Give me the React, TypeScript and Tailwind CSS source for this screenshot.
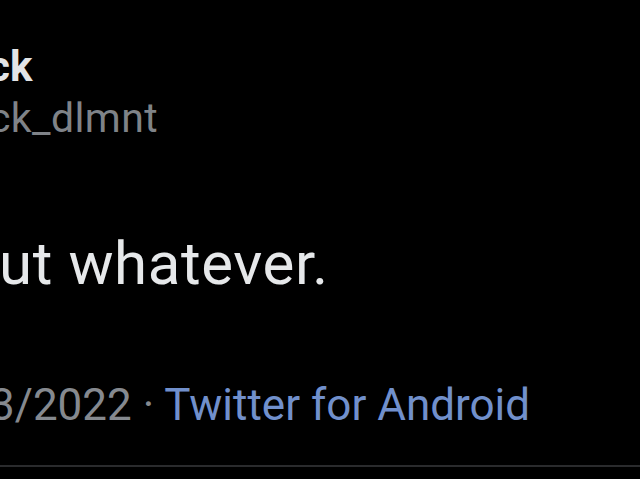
export default function App() {
  return (
    <div
      className="w-[640px] h-[479px] bg-black overflow-hidden flex flex-col"
      style={{ fontFamily: "Roboto, 'Noto Sans', sans-serif" }}
    >
      <div className="mt-[46px] -ml-[12px] text-[42px] leading-[42px] font-bold text-[#e2e4e6] whitespace-nowrap">
        ck
      </div>
      <div className="mt-[10px] -ml-[11px] text-[41px] leading-[41px] tracking-[0.4px] text-[#7f8388] whitespace-nowrap">
        ck_dlmnt
      </div>
      <div className="mt-[95px] -ml-[1px] text-[60px] leading-[60px] tracking-[0.6px] text-[#e6e8ea] whitespace-nowrap">
        ut whatever.
      </div>
      <div className="mt-[89px] -ml-[10px] text-[44px] leading-[44px] whitespace-nowrap">
        <span className="text-[#85898f]">3/2022 · </span>
        <span className="text-[#7190cc]">Twitter for Android</span>
      </div>
      <div className="mt-[38px] h-[2px] bg-[#2a2b2d]" />
    </div>
  );
}
